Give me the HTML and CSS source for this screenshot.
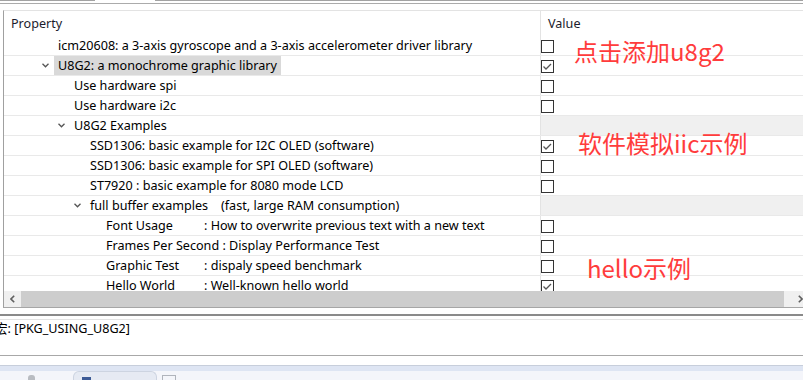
FILE: index.html
```html
<!doctype html>
<html>
  <head>
    <meta http-equiv="Content-Type" content="text/html; charset=utf-8"/>
    <title>RT-Thread Settings</title>
    <link rel="stylesheet" href="styles.css">
  </head>
  <body>
    <div class="topbar">
      <div class="tabline"><span class="seg seg-a"></span><span class="seg seg-b"></span></div>
      <div class="rule"></div>
    </div>

    <div class="panel">
      <div class="tree">
        <div class="row head">
          <div class="prop">Property</div>
          <div class="val">Value</div>
        </div>

        <div class="row">
          <div class="prop lv0"><span class="tw"></span><span class="label">icm20608: a 3-axis gyroscope and a 3-axis accelerometer driver library</span></div>
          <div class="val"><span class="cb"></span></div>
        </div>
        <div class="row">
          <div class="prop lv0"><span class="tw open"><svg width="7" height="5" viewBox="0 0 7 5"><polyline points="0.5,0.8 3.5,3.8 6.5,0.8"/></svg></span><span class="label sel">U8G2: a monochrome graphic library</span></div>
          <div class="val"><span class="cb on"><svg width="11" height="11" viewBox="0 0 11 11"><polyline points="1.5,5.5 4,8 9,3"/></svg></span></div>
        </div>
        <div class="row">
          <div class="prop lv1"><span class="tw"></span><span class="label">Use hardware spi</span></div>
          <div class="val"><span class="cb"></span></div>
        </div>
        <div class="row">
          <div class="prop lv1"><span class="tw"></span><span class="label">Use hardware i2c</span></div>
          <div class="val"><span class="cb"></span></div>
        </div>
        <div class="row">
          <div class="prop lv1"><span class="tw open"><svg width="7" height="5" viewBox="0 0 7 5"><polyline points="0.5,0.8 3.5,3.8 6.5,0.8"/></svg></span><span class="label">U8G2 Examples</span></div>
          <div class="val group"></div>
        </div>
        <div class="row">
          <div class="prop lv2"><span class="tw"></span><span class="label">SSD1306: basic example for I2C OLED (software)</span></div>
          <div class="val"><span class="cb on"><svg width="11" height="11" viewBox="0 0 11 11"><polyline points="1.5,5.5 4,8 9,3"/></svg></span></div>
        </div>
        <div class="row">
          <div class="prop lv2"><span class="tw"></span><span class="label">SSD1306: basic example for SPI OLED (software)</span></div>
          <div class="val"><span class="cb"></span></div>
        </div>
        <div class="row">
          <div class="prop lv2"><span class="tw"></span><span class="label">ST7920 : basic example for 8080 mode LCD</span></div>
          <div class="val"><span class="cb"></span></div>
        </div>
        <div class="row">
          <div class="prop lv2"><span class="tw open"><svg width="7" height="5" viewBox="0 0 7 5"><polyline points="0.5,0.8 3.5,3.8 6.5,0.8"/></svg></span><span class="label"><span class="key wide">full buffer examples</span>(fast, large RAM consumption)</span></div>
          <div class="val group"></div>
        </div>
        <div class="row">
          <div class="prop lv3"><span class="tw"></span><span class="label"><span class="key">Font Usage</span>: How to overwrite previous text with a new text</span></div>
          <div class="val"><span class="cb"></span></div>
        </div>
        <div class="row">
          <div class="prop lv3"><span class="tw"></span><span class="label">Frames Per Second : Display Performance Test</span></div>
          <div class="val"><span class="cb"></span></div>
        </div>
        <div class="row">
          <div class="prop lv3"><span class="tw"></span><span class="label"><span class="key">Graphic Test</span>: dispaly speed benchmark</span></div>
          <div class="val"><span class="cb"></span></div>
        </div>
        <div class="row">
          <div class="prop lv3"><span class="tw"></span><span class="label"><span class="key">Hello World</span>: Well-known hello world</span></div>
          <div class="val"><span class="cb on"><svg width="11" height="11" viewBox="0 0 11 11"><polyline points="1.5,5.5 4,8 9,3"/></svg></span></div>
        </div>
      </div>

      <div class="hscroll">
        <span class="sb-btn"><svg width="5" height="8" viewBox="0 0 5 8"><polyline points="4.2,0.8 1,4 4.2,7.2"/></svg></span>
        <span class="sb-thumb"></span>
        <span class="sb-rest"><svg width="5" height="8" viewBox="0 0 5 8"><polyline points="0.8,0.8 4,4 0.8,7.2"/></svg></span>
      </div>
    </div>

    <div class="sash"><div class="sash-line"></div></div>
    <div class="desc">宏: [PKG_USING_U8G2]</div>
    <div class="tabbar">
      <span class="ticon"></span>
      <span class="tab"><span class="tab-icon"></span></span>
      <span class="tbox"></span>
    </div>

    <div class="note n1">点击添加u8g2</div>
    <div class="note n2">软件模拟iic示例</div>
    <div class="note n3">hello示例</div>
  </body>
</html>
```

FILE: styles.css
```css
body {
    margin: 0;
    width: 803px;
    height: 381px;
    overflow: hidden;
    position: relative;
    background: #fff;
    color: #000;
    font: 12.6px "Noto Sans", "Noto Sans CJK SC", sans-serif;
}
.topbar {
    height: 10px;
}
.tabline {
    display: flex;
    height: 1px;
}
.seg {
    display: block;
    background: #a3a3a3;
}
.seg-a { width: 95px; }
.seg-b { margin-left: 60px; flex: 1; }
.rule {
    margin-top: 2px;
    height: 1px;
    background: #ababab;
}
.panel {
    margin-left: 3px;
    border-left: 1px solid #a0a0a0;
    border-top: 1px solid #e3e3e3;
    border-bottom: 1px solid #a6a6a6;
}
.tree {
    height: 280px;
    overflow: hidden;
}
.row {
    display: flex;
    height: 20px;
    box-sizing: border-box;
    border-bottom: 1px solid #e9e9e9;
}
.row.head {
    height: 25px;
    border-bottom: none;
}
.prop {
    width: 537px;
    flex: none;
    box-sizing: border-box;
    display: flex;
    align-items: stretch;
    white-space: nowrap;
    overflow: hidden;
    border-right: 1px solid #e3e3e3;
}
.val {
    flex: 1;
}
.head .prop, .head .val {
    display: flex;
    align-items: center;
    padding-left: 7px;
    color: #1c1c2c;
}
.lv0 { padding-left: 34px; }
.lv1 { padding-left: 50px; }
.lv2 { padding-left: 66px; }
.lv3 { padding-left: 82px; }
.tw {
    width: 16px;
    flex: none;
    display: flex;
    align-items: center;
    padding-left: 4px;
    box-sizing: border-box;
}
.tw svg polyline {
    fill: none;
    stroke: #555;
    stroke-width: 1.3;
}
.label {
    padding: 0 4px;
    line-height: 19px;
}
.label.sel {
    background: #d9d9d9;
}
.key {
    display: inline-block;
    min-width: 98px;
}
.key.wide { min-width: 131px; }
.val.group {
    background: #f0f0f0;
}
.cb {
    display: block;
    width: 13px;
    height: 13px;
    margin-top: 4px;
    box-sizing: border-box;
    border: 1px solid #333;
    background: #fff;
}
.cb svg {
    display: block;
}
.cb svg polyline {
    fill: none;
    stroke: #555;
    stroke-width: 1.3;
}
.hscroll {
    display: flex;
    height: 16px;
}
.sb-btn {
    width: 17px;
    background: #f0f0f0;
    display: flex;
    align-items: center;
    justify-content: center;
}
.sb-thumb {
    width: 763px;
    background: #cdcdcd;
}
.sb-rest {
    flex: 1;
    background: #f0f0f0;
    display: flex;
    align-items: center;
    padding-left: 14px;
}
.hscroll svg polyline {
    fill: none;
    stroke: #606060;
    stroke-width: 1.6;
}
.sash {
    padding-top: 6px;
}
.sash-line {
    height: 2px;
    background: #8a8a8a;
    margin-bottom: 3px;
}
.desc {
    border-top: 1px solid #e3e3e3;
    border-bottom: 1px solid #a8a8a8;
    height: 37px;
    box-sizing: border-box;
    padding-top: 1px;
    line-height: 16px;
    text-indent: -5px;
    white-space: nowrap;
}
.tabbar {
    margin-top: 9px;
    border-top: 1px solid #c7cedb;
    height: 14px;
    display: flex;
    align-items: flex-end;
    background: linear-gradient(#dee5f3 0, #dee5f3 5px, #f4f5fa 5px);
}
.ticon {
    width: 7px;
    height: 5px;
    margin-left: 28px;
    border-radius: 3px 3px 0 0;
    background: #b9bcc2;
}
.tab {
    margin-left: 38px;
    width: 84px;
    height: 9px;
    box-sizing: border-box;
    border: 1px solid #cdd4e1;
    border-bottom: none;
    border-radius: 6px 6px 0 0;
    background: #e6eaf3;
    display: flex;
    align-items: flex-end;
}
.tab-icon {
    width: 9px;
    height: 3px;
    margin-left: 8px;
    background: #3d5b96;
}
.tbox {
    margin-left: 5px;
    width: 12px;
    height: 4px;
    border: 1px solid #b0b4bc;
    border-bottom: none;
}
.note {
    position: absolute;
    color: #ff3c3c;
    font: 24px/24px "Noto Sans CJK SC", sans-serif;
    white-space: nowrap;
}
.n1 { left: 574px; top: 39px; }
.n2 { left: 578px; top: 131px; }
.n3 { left: 587px; top: 256px; }
```
